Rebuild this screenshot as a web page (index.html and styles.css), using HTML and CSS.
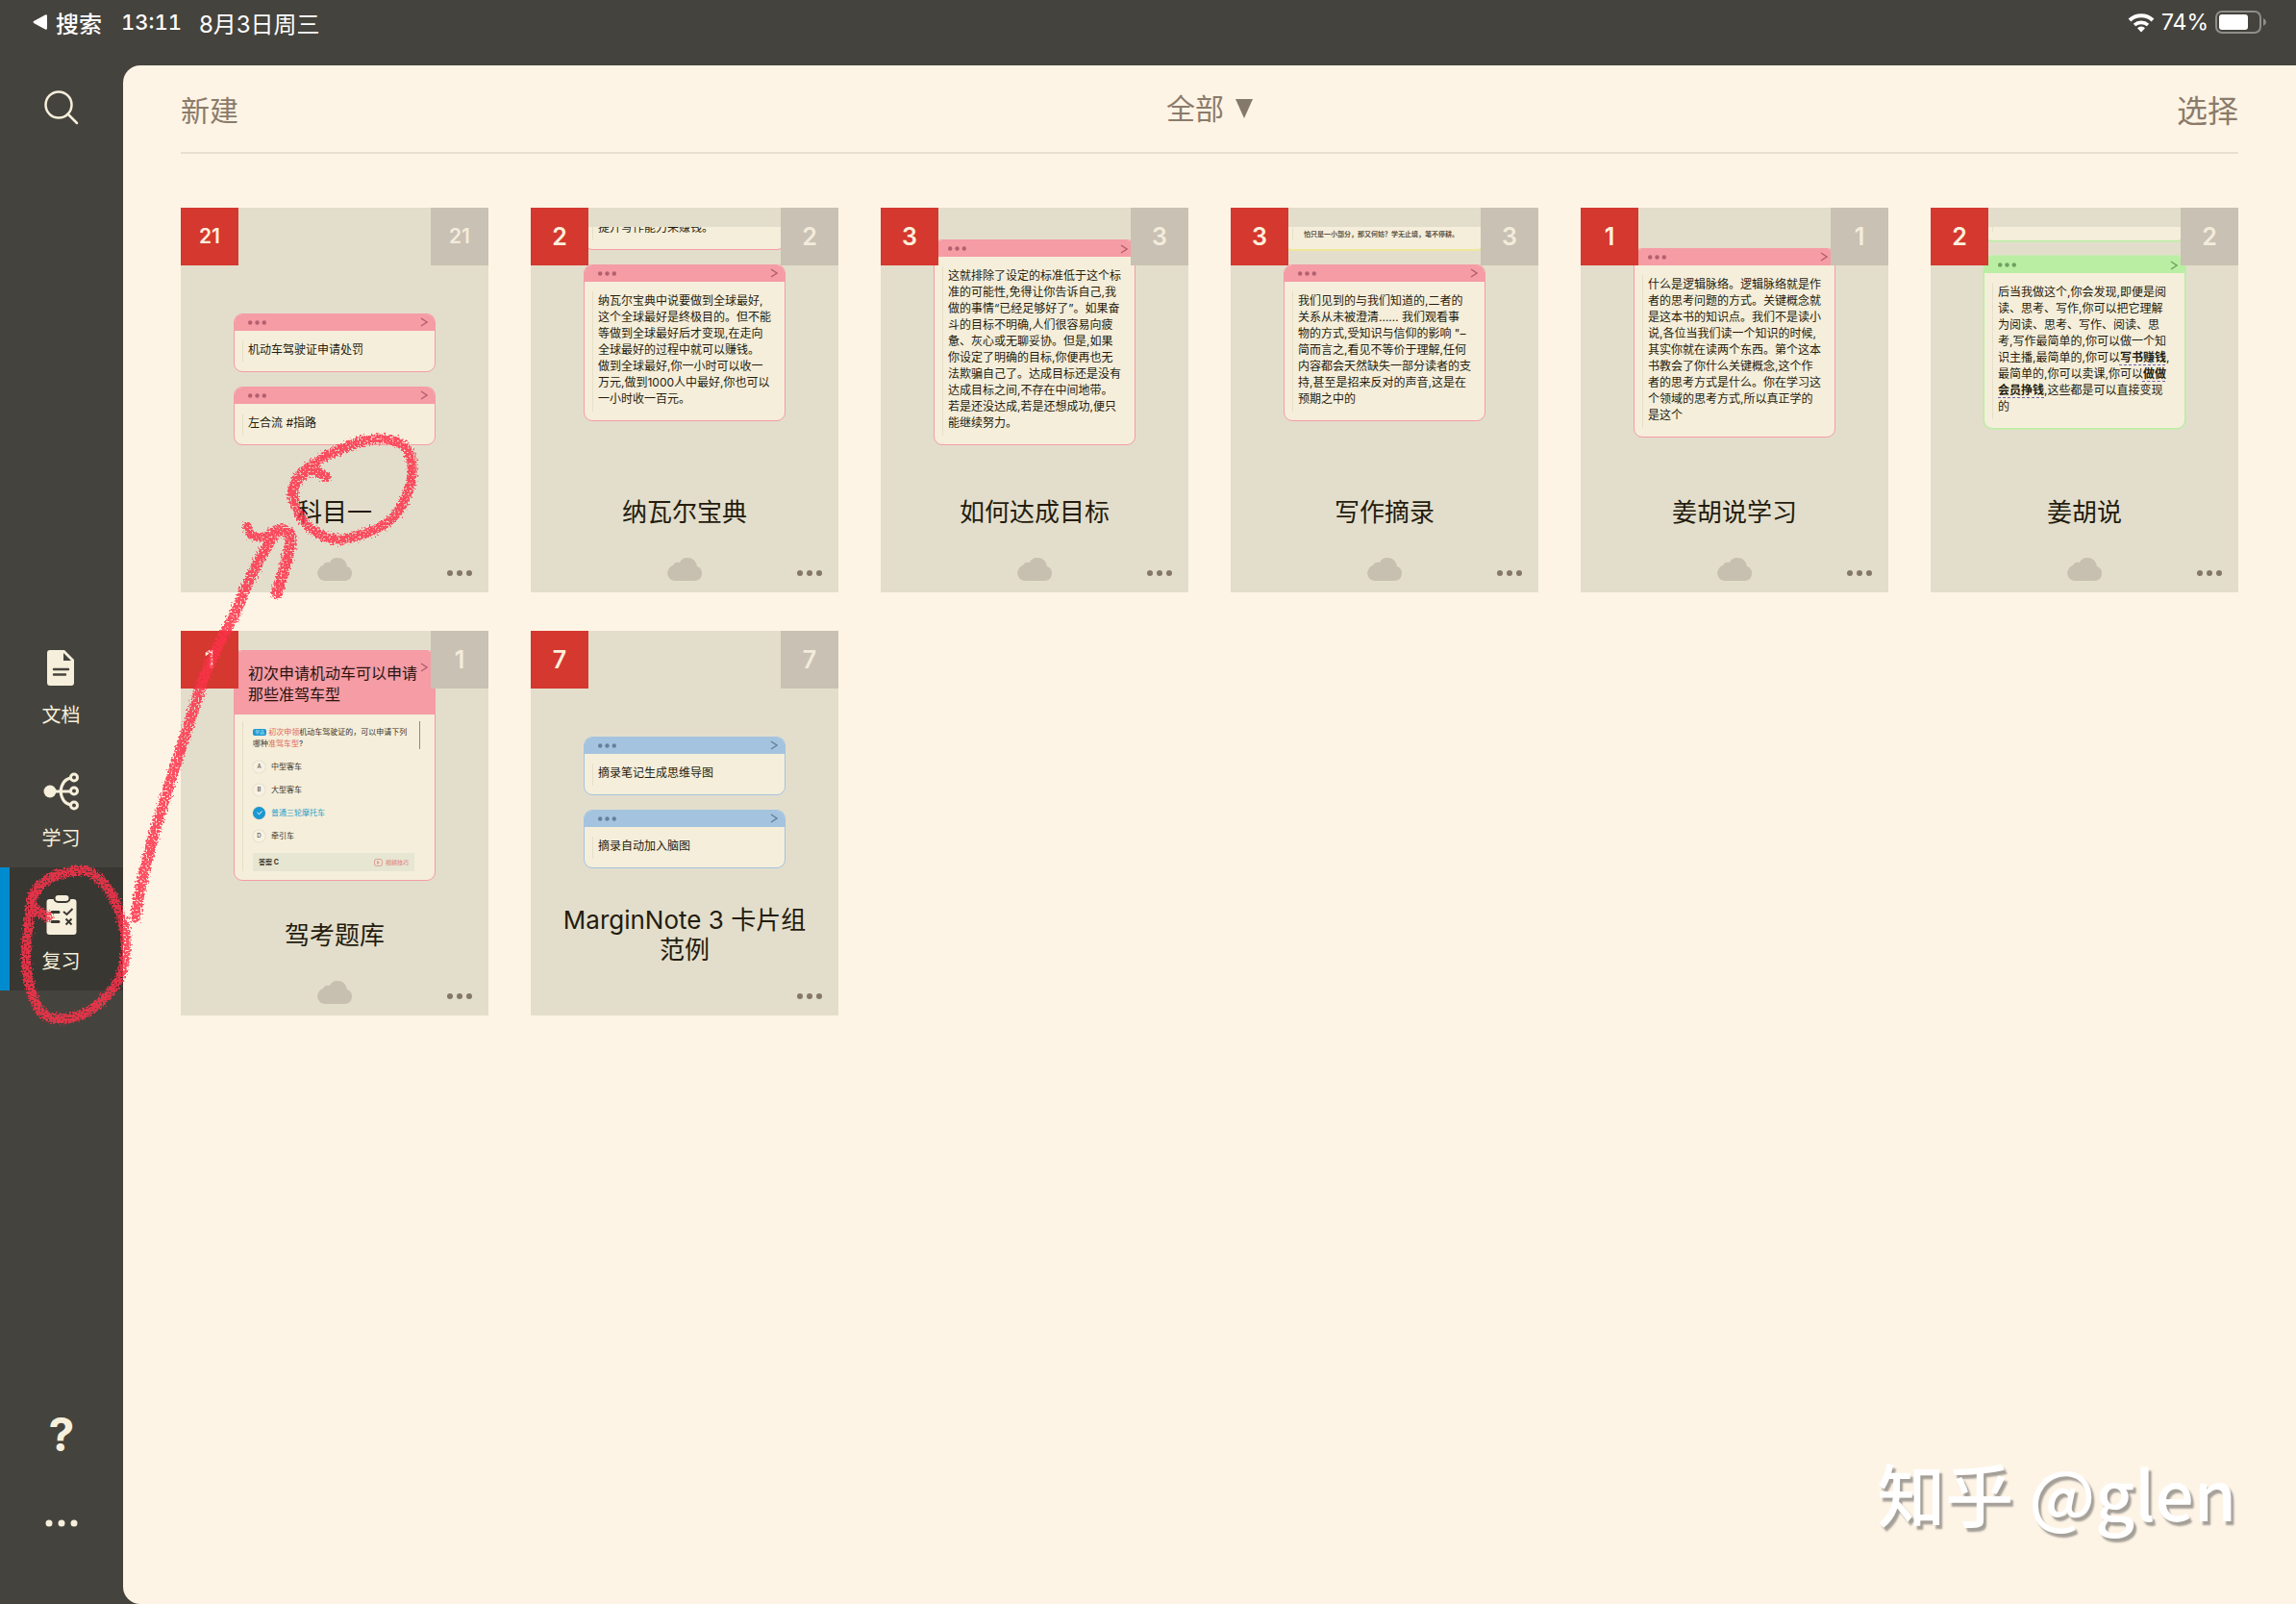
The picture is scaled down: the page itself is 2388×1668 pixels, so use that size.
FILE: index.html
```html
<!DOCTYPE html>
<html lang="zh-CN">
<head>
  <meta charset="UTF-8">
  <meta name="viewport" content="width=device-width, initial-scale=1.0">
  <title>复习</title>
  <link rel="stylesheet" href="styles.css">
</head>
<body>
  <svg class="defs" width="0" height="0" aria-hidden="true">
    <symbol id="cloud" viewBox="0 0 36 24">
      <path d="M8 24a8 8 0 0 1-6-13C3 9 5 8 6 8c1-3 4-4 7-3 1-3 4-5 8-5 5 0 9 3 10 9 3 1 5 3 5 7 0 5-3 8-8 8z"/>
    </symbol>
    <symbol id="more" viewBox="0 0 26 6">
      <circle cx="3" cy="3" r="3"/><circle cx="13" cy="3" r="3"/><circle cx="23" cy="3" r="3"/>
    </symbol>
    <symbol id="chevron" viewBox="0 0 8 10">
      <path d="M1 1l6 4-6 4" fill="none" stroke="currentColor" stroke-width="1.4"/>
    </symbol>
  </svg>

  <header class="status">
    <a class="back" href="#">
      <svg width="16" height="16" viewBox="0 0 16 16"><path d="M1.500 6.800L13 .6q2-.9 2 1.200v12.400q0 2.100-2 1.200L1.500 9.200q-2-1.200 0-2.400z" fill="#fff"/></svg>
      搜索
    </a>
    <span class="time">13:11</span>
    <span class="date">8月3日周三</span>
    <span class="power">
      <svg width="28" height="21" viewBox="0 0 28 21">
        <path d="M2 8a17.500 17.500 0 0 1 24 0" fill="none" stroke="#fff" stroke-width="4"/>
        <path d="M7 13a10.500 10.500 0 0 1 14 0" fill="none" stroke="#fff" stroke-width="3.600"/>
        <path d="M14 20.500l-4-4.200a5.600 5.600 0 0 1 8 0z" fill="#fff"/>
      </svg>
      <span>74%</span>
      <svg width="54" height="24" viewBox="0 0 54 24">
        <rect x="1" y="1" width="46" height="22" rx="6" fill="none" stroke="#8f8e89" stroke-width="2"/>
        <rect x="4" y="4" width="30" height="16" rx="3" fill="#fff"/>
        <path d="M50 8q3 1.500 3 4t-3 4z" fill="#8f8e89"/>
      </svg>
    </span>
  </header>

  <div class="app">
    <aside class="sidebar">
      <button class="search" aria-label="搜索">
        <svg width="36" height="36" viewBox="0 0 36 36" fill="none" stroke="#f6efdb" stroke-width="2.500" stroke-linecap="round">
          <circle cx="15" cy="15" r="13.500"/><path d="M24.500 24.500L34 34"/>
        </svg>
      </button>
      <nav class="nav">
        <a href="#">
          <svg width="40" height="42" viewBox="0 0 40 42">
            <path d="M8 2h15l10 10v24q0 3-3 3H8q-3 0-3-3V5q0-3 3-3z" fill="#f6efdb"/>
            <path d="M22 5v8h8z" fill="#45433d"/>
            <path d="M12 22h15M12 27.500h12" stroke="#45433d" stroke-width="2.400" stroke-linecap="round"/>
          </svg>
          文档
        </a>
        <a href="#">
          <svg width="40" height="42" viewBox="0 0 40 42" fill="none" stroke="#f6efdb" stroke-width="3">
            <circle cx="8" cy="21" r="6.500" fill="#f6efdb" stroke="none"/>
            <path d="M8 21h21M30 7c-7 1-10 6-11 14 1 8 4 13 11 14"/>
            <g fill="#45433d"><circle cx="33" cy="6.500" r="3.500"/><circle cx="33" cy="20.500" r="3.500"/><circle cx="33" cy="35.500" r="3.500"/></g>
          </svg>
          学习
        </a>
        <a class="active" href="#">
          <svg width="40" height="42" viewBox="0 0 40 42">
            <rect x="4.500" y="5" width="31" height="37" rx="3" fill="#f6efdb"/>
            <rect x="12.500" y="0" width="16" height="8" rx="4" fill="#f6efdb" stroke="#383731" stroke-width="2"/>
            <path d="M10 18.500h7M10 28.500h7" stroke="#383731" stroke-width="3" stroke-linecap="round"/>
            <path d="M22 18l3.500 3 6-6M24.500 25.500l6 6M30.500 25.500l-6 6" fill="none" stroke="#383731" stroke-width="2"/>
          </svg>
          复习
        </a>
      </nav>
      <div class="tools">
        <button class="help" aria-label="帮助">?</button>
        <button aria-label="更多">
          <svg width="34" height="8" viewBox="0 0 34 8" fill="#f6efdb"><circle cx="4" cy="4" r="3.500"/><circle cx="17" cy="4" r="3.500"/><circle cx="30" cy="4" r="3.500"/></svg>
        </button>
      </div>
    </aside>

    <main class="main">
      <div class="toolbar">
        <button class="create">新建</button>
        <label class="filter">
          <select aria-label="筛选"><option>全部</option></select>
          <svg width="18" height="20" viewBox="0 0 18 20"><path d="M0 0h18L9 20z" fill="#85796b"/></svg>
        </label>
        <button class="select">选择</button>
      </div>

      <div class="decks">
        <article class="deck">
          <div class="preview">
            <div class="before"></div>
            <div class="note">
              <div class="bar"><svg class="dots"><use href="#more"/></svg><svg class="go"><use href="#chevron"/></svg></div>
              <div class="text"><p>机动车驾驶证申请处罚</p></div>
            </div>
            <div class="after">
              <div class="note">
                <div class="bar"><svg class="dots"><use href="#more"/></svg><svg class="go"><use href="#chevron"/></svg></div>
                <div class="text"><p>左合流 #指路</p></div>
              </div>
            </div>
          </div>
          <span class="badge due long">21</span><span class="badge total long">21</span>
          <h2>科目一</h2>
          <div class="foot">
            <svg class="cloud"><use href="#cloud"/></svg>
            <button aria-label="更多"><svg class="more"><use href="#more"/></svg></button>
          </div>
        </article>

        <article class="deck">
          <div class="preview">
            <div class="before">
              <div class="note">
                <div class="text"><p>提升写作能力来赚钱。</p></div>
              </div>
            </div>
            <div class="note">
              <div class="bar"><svg class="dots"><use href="#more"/></svg><svg class="go"><use href="#chevron"/></svg></div>
              <div class="text"><p>纳瓦尔宝典中说要做到全球最好,<br>这个全球最好是终极目的。但不能<br>等做到全球最好后才变现,在走向<br>全球最好的过程中就可以赚钱。<br>做到全球最好,你一小时可以收一<br>万元,做到1000人中最好,你也可以<br>一小时收一百元。</p></div>
            </div>
          </div>
          <span class="badge due">2</span><span class="badge total">2</span>
          <h2>纳瓦尔宝典</h2>
          <div class="foot">
            <svg class="cloud"><use href="#cloud"/></svg>
            <button aria-label="更多"><svg class="more"><use href="#more"/></svg></button>
          </div>
        </article>

        <article class="deck">
          <div class="preview">
            <div class="before"></div>
            <div class="note">
              <div class="bar"><svg class="dots"><use href="#more"/></svg><svg class="go"><use href="#chevron"/></svg></div>
              <div class="text"><p>这就排除了设定的标准低于这个标<br>准的可能性,免得让你告诉自己,我<br>做的事情“已经足够好了”。如果奋<br>斗的目标不明确,人们很容易向疲<br>惫、灰心或无聊妥协。但是,如果<br>你设定了明确的目标,你便再也无<br>法欺骗自己了。达成目标还是没有<br>达成目标之间,不存在中间地带。<br>若是还没达成,若是还想成功,便只<br>能继续努力。</p></div>
            </div>
          </div>
          <span class="badge due">3</span><span class="badge total">3</span>
          <h2>如何达成目标</h2>
          <div class="foot">
            <svg class="cloud"><use href="#cloud"/></svg>
            <button aria-label="更多"><svg class="more"><use href="#more"/></svg></button>
          </div>
        </article>

        <article class="deck">
          <div class="preview">
            <div class="before">
              <div class="note yellow">
                <div class="text"><p class="small">怕只是一小部分，那又何妨？学无止境，笔不停耕。</p></div>
              </div>
            </div>
            <div class="note">
              <div class="bar"><svg class="dots"><use href="#more"/></svg><svg class="go"><use href="#chevron"/></svg></div>
              <div class="text"><p>我们见到的与我们知道的,二者的<br>关系从未被澄清…… 我们观看事<br>物的方式,受知识与信仰的影响 "–<br>简而言之,看见不等价于理解,任何<br>内容都会天然缺失一部分读者的支<br>持,甚至是招来反对的声音,这是在<br>预期之中的</p></div>
            </div>
          </div>
          <span class="badge due">3</span><span class="badge total">3</span>
          <h2>写作摘录</h2>
          <div class="foot">
            <svg class="cloud"><use href="#cloud"/></svg>
            <button aria-label="更多"><svg class="more"><use href="#more"/></svg></button>
          </div>
        </article>

        <article class="deck">
          <div class="preview">
            <div class="before"></div>
            <div class="note">
              <div class="bar"><svg class="dots"><use href="#more"/></svg><svg class="go"><use href="#chevron"/></svg></div>
              <div class="text"><p>什么是逻辑脉络。逻辑脉络就是作<br>者的思考问题的方式。关键概念就<br>是这本书的知识点。我们不是读小<br>说,各位当我们读一个知识的时候,<br>其实你就在读两个东西。第个这本<br>书教会了你什么关键概念,这个作<br>者的思考方式是什么。你在学习这<br>个领域的思考方式,所以真正学的<br>是这个</p></div>
            </div>
          </div>
          <span class="badge due">1</span><span class="badge total">1</span>
          <h2>姜胡说学习</h2>
          <div class="foot">
            <svg class="cloud"><use href="#cloud"/></svg>
            <button aria-label="更多"><svg class="more"><use href="#more"/></svg></button>
          </div>
        </article>

        <article class="deck">
          <div class="preview">
            <div class="before">
              <div class="note green">
                <div class="text"><p>&nbsp;</p></div>
              </div>
            </div>
            <div class="note green">
              <div class="bar"><svg class="dots"><use href="#more"/></svg><svg class="go"><use href="#chevron"/></svg></div>
              <div class="text"><p>后当我做这个,你会发现,即便是阅<br>读、思考、写作,你可以把它理解<br>为阅读、思考、写作、阅读、思<br>考,写作最简单的,你可以做一个知<br>识主播,最简单的,你可以<b>写书赚钱</b>,<br>最简单的,你可以卖课,你可以<b>做做</b><br><b>会员挣钱</b>,这些都是可以直接变现<br>的</p></div>
            </div>
          </div>
          <span class="badge due">2</span><span class="badge total">2</span>
          <h2>姜胡说</h2>
          <div class="foot">
            <svg class="cloud"><use href="#cloud"/></svg>
            <button aria-label="更多"><svg class="more"><use href="#more"/></svg></button>
          </div>
        </article>

        <article class="deck">
          <div class="preview">
            <div class="before"></div>
            <div class="note">
              <div class="bar titled">
                <h3>初次申请机动车可以申请<br>那些准驾车型</h3>
                <svg class="go"><use href="#chevron"/></svg>
              </div>
              <div class="quiz">
                <p class="question"><i>单选</i> <em>初次申领</em>机动车驾驶证的，可以申请下列<br>哪种<em>准驾车型</em>?</p>
                <ul>
                  <li><span>A</span>中型客车</li>
                  <li><span>B</span>大型客车</li>
                  <li class="right"><span><svg width="8" height="8" viewBox="0 0 8 8"><path d="M1.500 4l2 1.800 3-3.300" fill="none" stroke="#fff"/></svg></span>普通三轮摩托车</li>
                  <li><span>D</span>牵引车</li>
                </ul>
                <div class="answer">
                  <strong>答案 C</strong>
                  <a href="#"><svg width="9" height="8" viewBox="0 0 9 8" fill="none" stroke="currentColor" stroke-width=".8"><rect x=".5" y=".5" width="8" height="7" rx="2"/><path d="M3.500 2.500v3l2-1.500z"/></svg> 视频技巧</a>
                </div>
              </div>
            </div>
          </div>
          <span class="badge due">1</span><span class="badge total">1</span>
          <h2>驾考题库</h2>
          <div class="foot">
            <svg class="cloud"><use href="#cloud"/></svg>
            <button aria-label="更多"><svg class="more"><use href="#more"/></svg></button>
          </div>
        </article>

        <article class="deck">
          <div class="preview">
            <div class="before"></div>
            <div class="note blue">
              <div class="bar"><svg class="dots"><use href="#more"/></svg><svg class="go"><use href="#chevron"/></svg></div>
              <div class="text"><p>摘录笔记生成思维导图</p></div>
            </div>
            <div class="after">
              <div class="note blue">
                <div class="bar"><svg class="dots"><use href="#more"/></svg><svg class="go"><use href="#chevron"/></svg></div>
                <div class="text"><p>摘录自动加入脑图</p></div>
              </div>
            </div>
          </div>
          <span class="badge due">7</span><span class="badge total">7</span>
          <h2>MarginNote 3 卡片组<br>范例</h2>
          <div class="foot">
            <button aria-label="更多"><svg class="more"><use href="#more"/></svg></button>
          </div>
        </article>
      </div>
    </main>
  </div>

  <!-- red crayon marks -->
  <svg class="marks" width="460" height="1100" viewBox="0 0 460 1100" aria-hidden="true">
    <filter id="crayon" filterUnits="userSpaceOnUse" x="0" y="0" width="460" height="1100">
      <feTurbulence type="fractalNoise" baseFrequency=".5" numOctaves="2" seed="4" result="noise"/>
      <feDisplacementMap in="SourceGraphic" in2="noise" scale="10" xChannelSelector="R" yChannelSelector="G" result="rough"/>
      <feColorMatrix in="noise" type="matrix" values="0 0 0 0 0  0 0 0 0 0  0 0 0 0 0  0 0 5 0 -1.300" result="grain"/>
      <feComposite in="rough" in2="grain" operator="in"/>
    </filter>
    <g filter="url(#crayon)" fill="none" stroke="#ff334b" stroke-linecap="round" stroke-linejoin="round" opacity=".85">
      <path stroke-width="10" d="M339 496C328 486 315 489 307 500C320 481 350 468 372 460C392 454 415 455 424 468C434 486 427 513 414 532C402 549 376 558 353 561C332 561 314 545 308 527C302 512 304 501 318 492"/>
      <path stroke-width="11" d="M306 521Q300 505 315 493"/>
      <path stroke-width="11" d="M141 954C146 915 160 865 175 820C186 783 198 750 209 713C222 676 234 659 245 637C255 610 268 583 285 556"/>
      <path stroke-width="9" d="M257 547C260 562 270 560 281 556"/>
      <path stroke-width="12" d="M281 556C293 547 305 552 302 565C300 583 293 597 288 617"/>
      <path stroke-width="10" d="M51 953C41 950 33 944 32 936C37 916 57 910 80 905C107 903 124 940 129 965C137 1009 119 1033 93 1051C77 1061 52 1064 41 1050C23 1018 26 985 31 951C34 925 43 916 60 909"/>
      <path stroke-width="5" d="M132 960Q135 985 130 1004"/>
    </g>
  </svg>
  <div class="watermark">知乎 @glen</div>
</body>
</html>
```
FILE: styles.css
```css
* {
  box-sizing: border-box;
}

body {
  margin: 0;
  min-height: 100vh;
  display: flex;
  flex-direction: column;
  position: relative;
  background-color: #45433d;
  color: #241c0e;
  font-family: Inter, "Noto Sans CJK SC", sans-serif;
}

h2, h3, p, ul {
  margin: 0;
  padding: 0;
  font-weight: 400;
}

button, select {
  border: 0;
  padding: 0;
  background: none;
  font-family: inherit;
  color: inherit;
}

a {
  color: inherit;
  text-decoration: none;
}

svg {
  display: block;
}

.defs {
  position: absolute;
}

/* status bar */
.status {
  height: 68px;
  padding: 0 30px 22px 34px;
  display: flex;
  align-items: center;
  color: #fff;
  font-size: 24px;
}

.back {
  display: flex;
  align-items: center;
  gap: 8px;
  margin-right: 20px;
  font-weight: 500;
}

.time {
  margin-right: 18px;
  font-size: 22px;
  font-weight: 500;
  font-variant-numeric: tabular-nums;
}

.power {
  display: flex;
  align-items: center;
  gap: 7px;
  margin-left: auto;
  font-size: 23px;
}

.app {
  flex: 1;
  display: flex;
}

/* sidebar */
.sidebar {
  width: 128px;
  padding-bottom: 60px;
  display: grid;
  grid-template-rows: 1fr auto 1fr;
  color: #f6efdb;
}

.search {
  height: 88px;
  display: grid;
  place-items: center;
}

.nav a {
  height: 128px;
  padding: 28px 11px 0 0;
  border-left: 10px solid transparent;
  display: flex;
  flex-direction: column;
  align-items: center;
  gap: 12px;
  font-size: 20px;
  line-height: 32px;
}

.nav .active {
  background-color: #383731;
  border-left-color: #008bcf;
  background-clip: padding-box;
}

.tools {
  align-self: end;
  display: flex;
  flex-direction: column;
  gap: 44px;
}

.tools button {
  height: 48px;
  display: grid;
  place-items: center;
}

.tools .help {
  font-size: 48px;
  font-weight: 700;
  line-height: 46px;
}

/* main panel */
.main {
  flex: 1;
  padding: 0 60px 60px;
  background-color: #fef4e5;
  border-radius: 18px 0 0 18px;
}

.toolbar {
  height: 92px;
  border-bottom: 2px solid #e8dfd2;
  display: grid;
  grid-template-columns: 1fr auto 1fr;
  align-items: center;
  color: #8b7b6b;
}

.toolbar button,
.toolbar select {
  font-size: 30px;
}

.toolbar select {
  appearance: none;
}

.create {
  justify-self: start;
}

.toolbar .select {
  justify-self: end;
  font-size: 32px;
}

.filter {
  display: flex;
  align-items: center;
  gap: 12px;
}

.decks {
  margin-top: 56px;
  display: grid;
  grid-template-columns: repeat(auto-fill, 320px);
  gap: 40px 44px;
}

.deck {
  position: relative;
  height: 400px;
  padding-top: 20px;
  display: flex;
  flex-direction: column;
  background-color: #e3decc;
}

.deck h2 {
  flex: 1;
  padding-top: 12px;
  display: grid;
  place-items: center;
  align-content: center;
  text-align: center;
  font-size: 26px;
  line-height: 31px;
}

.badge {
  position: absolute;
  top: 0;
  width: 60px;
  height: 60px;
  text-align: center;
  line-height: 60px;
  font-size: 25px;
  font-weight: 600;
}

.long {
  font-size: 21px;
}

.due {
  left: 0;
  background-color: #d4382f;
  color: #fef0dc;
}

.total {
  right: 0;
  background-color: #c9c1b3;
  color: #f3ecdc;
}

.foot {
  height: 40px;
  padding: 4px 17px 0;
  display: grid;
  grid-template-columns: 1fr 36px 1fr;
}

.foot button {
  grid-column: 3;
  justify-self: end;
  height: 32px;
}

.cloud {
  grid-column: 2;
  width: 36px;
  height: 24px;
  fill: #c7bfaf;
}

.more {
  width: 26px;
  height: 6px;
  fill: #857869;
}

/* the current note sits in the middle, its neighbours are cut off */
.preview {
  height: 240px;
  padding: 0 55px;
  display: grid;
  grid-template-rows: minmax(0, 1fr) auto minmax(0, 1fr);
  overflow: hidden;
}

.before {
  display: flex;
  flex-direction: column;
  justify-content: flex-end;
  padding-bottom: 15px;
}

.after {
  padding-top: 15px;
}

.note {
  --tone: #f59ca5;
  --ink: #b3606f;
  flex: none;
  border: 1px solid var(--tone);
  border-radius: 9px;
  background-color: #f5eeda;
  overflow: hidden;
}

.blue {
  --tone: #a4c3de;
  --ink: #66809a;
}

.green {
  --tone: #b9eea3;
  --ink: #6fa05f;
  box-shadow: 0 0 0 1px #cbe8b8;
}

.yellow {
  --tone: #efe79a;
  box-shadow: 0 0 0 1px #efe79a;
}

.bar {
  height: 17px;
  padding: 0 7px 0 14px;
  display: flex;
  justify-content: space-between;
  align-items: center;
  background-color: var(--tone);
  color: var(--ink);
}

.dots {
  width: 19px;
  height: 5px;
  fill: var(--ink);
}

.go {
  width: 8px;
  height: 10px;
}

.text {
  padding: 10px 0 9px 8px;
}

.text p {
  padding: 1px 0 5px 5px;
  border-left: 1px solid #e6dfc8;
  font-size: 12px;
  line-height: 17px;
  white-space: nowrap;
}

.text .small {
  padding: 1px 0 0 11px;
  font-size: 7px;
  line-height: 12px;
  font-weight: 700;
  color: #5b564a;
}

.text b {
  text-decoration: underline dashed #6a5fae 1px;
  text-decoration-skip-ink: none;
  text-underline-offset: 3px;
}

/* quiz note */
.titled {
  height: 66px;
  align-items: flex-start;
  padding-top: 12px;
}

.titled h3 {
  font-size: 16px;
  line-height: 22px;
  color: #2b130f;
  white-space: nowrap;
}

.titled .go {
  flex: none;
  margin-left: -8px;
}

.quiz {
  margin: 7px 0 9px 8px;
  padding: 0 15px 0 10px;
  border-left: 1px solid #e6dfc8;
  font-size: 8px;
  line-height: 12px;
  font-weight: 500;
  color: #3a352b;
}

.question {
  padding: 5px 0 0;
  border-right: 1px solid #8f8a7c;
  white-space: nowrap;
}

.question i {
  display: inline-block;
  width: 14px;
  border-radius: 2px;
  background-color: #1a98d2;
  color: #bfe4f2;
  font-size: 5px;
  font-style: normal;
  line-height: 7px;
  text-align: center;
  vertical-align: 1px;
}

.question em {
  color: #e0655a;
  font-style: normal;
}

.quiz ul {
  margin-top: 6px;
  list-style: none;
}

.quiz li {
  height: 24px;
  display: flex;
  align-items: center;
  gap: 6px;
}

.quiz li span {
  width: 13px;
  height: 13px;
  border-radius: 50%;
  display: grid;
  place-items: center;
  background-color: #f7f1e2;
  box-shadow: 0 0 1px #b9b2a0;
  font-size: 6px;
}

.quiz .right {
  color: #2f9fc8;
}

.quiz .right span {
  background-color: #1a98d2;
}

.answer {
  height: 19px;
  margin: 6px 6px 0 0;
  padding: 0 6px;
  display: flex;
  justify-content: space-between;
  align-items: center;
  background-color: #e6e6d3;
  font-size: 7px;
}

.answer a {
  display: flex;
  gap: 3px;
  align-items: center;
  color: #e08a80;
  font-size: 6px;
}

/* overlays */
.marks {
  position: absolute;
  left: 0;
  top: 0;
  pointer-events: none;
}

.watermark {
  position: absolute;
  right: 62px;
  bottom: 67px;
  color: #fff;
  font-family: "Noto Sans CJK SC", sans-serif;
  font-size: 71px;
  font-weight: 500;
  line-height: 100px;
  text-shadow: 3px 4px 2px #a49f98;
}
```
